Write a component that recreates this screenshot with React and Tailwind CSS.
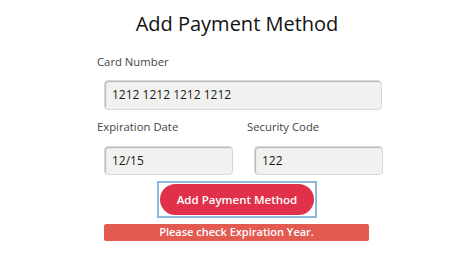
export default function App() {
  return (
    <div className="w-[474px] h-[261px] bg-white relative overflow-hidden" style={{ fontFamily: '"Open Sans", "DejaVu Sans", sans-serif' }}>
      <h1 className="pt-[9px] text-center text-[20px] leading-[30px] text-[#111]">Add Payment Method</h1>
      <div className="ml-[97px] w-[293px]">
        <label className="block mt-[15px] text-[11.3px] leading-[16px] text-[#444]">Card Number</label>
        <div className="mt-[10px] ml-[7px] w-[278px] h-[30px] rounded-[4px] bg-[#f1f2ef] border border-[#d8d8d6] shadow-[inset_1px_1px_1px_rgba(0,0,0,0.25)] flex items-center pl-[7px] text-[12px] text-[#1a1a1a]">
          1212 1212 1212 1212
        </div>
        <div className="flex mt-[9px]">
          <div className="w-[150px]">
            <label className="block text-[11.3px] leading-[16px] text-[#444]">Expiration Date</label>
            <div className="mt-[11px] ml-[7px] w-[129px] h-[29px] rounded-[4px] bg-[#f1f2ef] border border-[#d8d8d6] shadow-[inset_1px_1px_1px_rgba(0,0,0,0.25)] flex items-center pl-[7px] text-[12px] text-[#1a1a1a]">
              12/15
            </div>
          </div>
          <div className="w-[143px]">
            <label className="block text-[11.3px] leading-[16px] text-[#444]">Security Code</label>
            <div className="mt-[11px] ml-[7px] w-[129px] h-[29px] rounded-[4px] bg-[#f1f2ef] border border-[#d8d8d6] shadow-[inset_1px_1px_1px_rgba(0,0,0,0.25)] flex items-center pl-[7px] text-[12px] text-[#1a1a1a]">
              122
            </div>
          </div>
        </div>
      </div>
      <div className="flex justify-center mt-[6px]">
        <div className="w-[160px] h-[37px] border-2 border-[#8fb8e0] p-[1px]">
          <button className="w-full h-full rounded-full bg-[#e0304a] text-white text-[11.5px] font-semibold">
            Add Payment Method
          </button>
        </div>
      </div>
      <div className="ml-[104px] mt-[6px] w-[265px] h-[17px] rounded-[2px] bg-[#e35a50] flex items-center justify-center text-white text-[11px] font-semibold">
        Please check Expiration Year.
      </div>
    </div>
  );
}
